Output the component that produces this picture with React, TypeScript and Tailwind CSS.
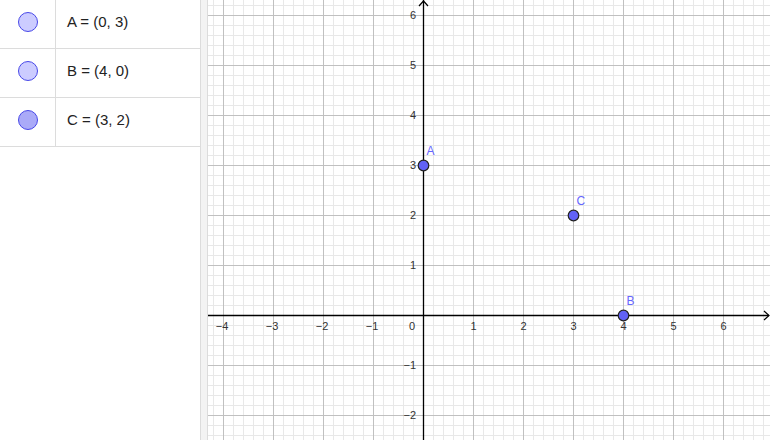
import React from "react";

const W = 562; // graph width (208..770)
const H = 440;
const OX = 215; // origin x in svg
const OY = 315;
const U = 50;

function Graph() {
  const minor: React.ReactNode[] = [];
  const major: React.ReactNode[] = [];
  for (let x = OX % 10; x <= W; x += 10) {
    const isMajor = (x - OX) % 50 === 0;
    if (x === OX) continue;
    (isMajor ? major : minor).push(
      <line key={"v" + x} x1={x + 0.5} y1={0} x2={x + 0.5} y2={H} stroke={isMajor ? "#c0c0c0" : "#e8e8e8"} strokeWidth={1} />
    );
  }
  for (let y = OY % 10; y <= H; y += 10) {
    const isMajor = (y - OY) % 50 === 0;
    if (y === OY) continue;
    (isMajor ? major : minor).push(
      <line key={"h" + y} x1={0} y1={y + 0.5} x2={W} y2={y + 0.5} stroke={isMajor ? "#c0c0c0" : "#e8e8e8"} strokeWidth={1} />
    );
  }
  const xl = [-4, -3, -2, -1, 1, 2, 3, 4, 5, 6];
  const yl = [6, 5, 4, 3, 2, 1, -1, -2];
  const fmt = (n: number) => (n < 0 ? "\u2212" + Math.abs(n) : String(n));
  const pts = [
    { n: "A", x: 0, y: 3 },
    { n: "B", x: 4, y: 0 },
    { n: "C", x: 3, y: 2 },
  ];
  return (
    <svg width={W} height={H} className="block" style={{ fontFamily: '"Liberation Sans", Arial, sans-serif' }}>
      {minor}
      {major}
      <line x1={0} y1={OY + 0.5} x2={W - 1} y2={OY + 0.5} stroke="#000" strokeWidth={1.3} />
      <line x1={OX + 0.5} y1={0} x2={OX + 0.5} y2={H} stroke="#000" strokeWidth={1.3} />
      <polyline points={`${W - 6},${OY - 4} ${W - 1},${OY + 0.5} ${W - 6},${OY + 5}`} fill="none" stroke="#000" strokeWidth={1.2} />
      <polyline points={`${OX - 4},${6} ${OX + 0.5},${1} ${OX + 5},${6}`} fill="none" stroke="#000" strokeWidth={1.2} />
      {xl.map((n) => (
        <text key={"xl" + n} x={OX + n * U + (n < 0 ? -1 : 0.5)} y={OY + 15} fontSize={11} fill="#333" textAnchor="middle">
          {fmt(n)}
        </text>
      ))}
      <text x={OX - 11} y={OY + 15} fontSize={11} fill="#333" textAnchor="middle">0</text>
      {yl.map((n) => (
        <text key={"yl" + n} x={OX - 7} y={OY - n * U + 4} fontSize={11} fill="#333" textAnchor="end">
          {fmt(n)}
        </text>
      ))}
      {pts.map((p) => (
        <g key={p.n}>
          <circle cx={OX + p.x * U + 0.5} cy={OY - p.y * U + 0.5} r={5.3} fill="#6161f5" stroke="#222" strokeWidth={1.2} />
          <text x={OX + p.x * U + 3.5} y={OY - p.y * U - 10} fontSize={12} fill="#6666ff">
            {p.n}
          </text>
        </g>
      ))}
    </svg>
  );
}

function Row({ label, fill }: { label: string; fill: string }) {
  return (
    <div className="flex h-[49px] border-b border-[#dcdcdc]">
      <div className="w-[56px] flex items-center justify-center border-r border-[#dcdcdc] shrink-0 pb-[4px]">
        <div className="w-[20px] h-[20px] rounded-full border border-[#4848e8]" style={{ background: fill }} />
      </div>
      <div className="flex items-center pl-[11px] pb-[4px] text-[15px] text-[#222]" style={{ fontFamily: '"Liberation Sans", Arial, sans-serif' }}>
        {label}
      </div>
    </div>
  );
}

export default function App() {
  return (
    <div className="flex w-[770px] h-[440px] overflow-hidden bg-white">
      <div className="w-[200px] shrink-0 bg-white">
        <Row label="A = (0, 3)" fill="#ccccff" />
        <Row label="B = (4, 0)" fill="#ccccff" />
        <Row label="C = (3, 2)" fill="#aaaaf8" />
      </div>
      <div className="w-[8px] shrink-0 bg-[#f3f3f3] border-l border-r border-[#dcdcdc]" />
      <div className="flex-1 overflow-hidden">
        <Graph />
      </div>
    </div>
  );
}
